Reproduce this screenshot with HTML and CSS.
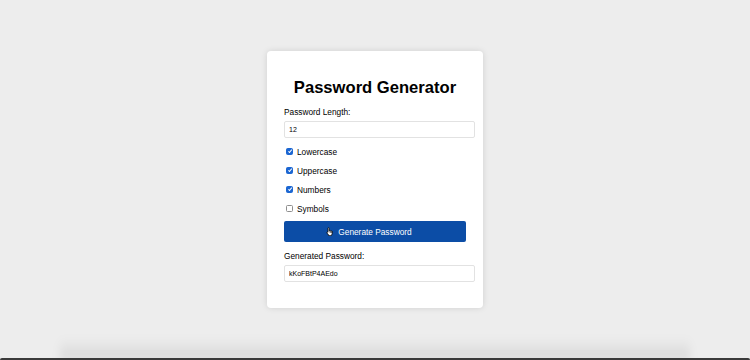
FILE: index.html
```html
<!DOCTYPE html>
<html lang="en">
<head>
  <meta charset="utf-8" />
  <meta name="viewport" content="width=device-width, initial-scale=1.0" />
  <title>Password Generator</title>
  <link rel="stylesheet" href="styles.css">
</head>
<body>
  <div class="container">
    <h1>Password Generator</h1>

    <label for="length" class="field-label">Password Length:</label>
    <input type="number" id="length" class="text-input" value="12" min="4" max="64">

    <div class="option"><input type="checkbox" id="lowercase" checked><label for="lowercase">Lowercase</label></div>
    <div class="option"><input type="checkbox" id="uppercase" checked><label for="uppercase">Uppercase</label></div>
    <div class="option"><input type="checkbox" id="numbers" checked><label for="numbers">Numbers</label></div>
    <div class="option"><input type="checkbox" id="symbols"><label for="symbols">Symbols</label></div>

    <button id="generate" class="generate-btn">
      Generate Password
      <svg class="cursor" viewBox="0 0 16 18" width="8" height="9">
        <path d="M5 1.2c.8 0 1.4.6 1.4 1.4v5.2l.6-.1c.4-.6 1.4-.6 1.8 0 .4-.5 1.4-.5 1.8.2.5-.3 1.5-.1 1.6.7l.3 3.6c0 1.6-.6 3-1.6 4v1.2H5.2v-1.4L2 12.2c-.6-.8-.4-1.7.4-2 .6-.3 1.2 0 1.6.5V2.6c0-.8.4-1.4 1-1.4z" fill="#fff" stroke="#000" stroke-width="1.6" stroke-linejoin="round"/>
        <path d="M8.1 8.4v3.2M9.9 8.6v3M11.7 9v2.6" stroke="#000" stroke-width="1.2"/>
      </svg>
    </button>

    <label for="password" class="field-label">Generated Password:</label>
    <input type="text" id="password" class="text-input" value="kKoFBtP4AEdo" readonly>
  </div>

  <div class="window-edge"></div>

  <script>
    const sets = {
      lowercase: "abcdefghijklmnopqrstuvwxyz",
      uppercase: "ABCDEFGHIJKLMNOPQRSTUVWXYZ",
      numbers: "0123456789",
      symbols: "!@#$%^&*()_+-=[]{}"
    };

    document.getElementById("generate").addEventListener("click", () => {
      const length = parseInt(document.getElementById("length").value, 10) || 12;
      let chars = "";
      Object.keys(sets).forEach(key => {
        if (document.getElementById(key).checked) chars += sets[key];
      });
      if (!chars) return;

      let result = "";
      for (let i = 0; i < length; i++) {
        result += chars[Math.floor(Math.random() * chars.length)];
      }
      document.getElementById("password").value = result;
    });
  </script>
</body>
</html>
```

FILE: styles.css
```css
html, body {
  height: 100%;
}

body {
  margin: 0;
  background: #ededed;
  font-family: 'Liberation Sans', Arial, sans-serif;
  color: #000;
  overflow: hidden;
}

.container {
  box-sizing: border-box;
  width: 216px;
  margin: 51px auto 0;
  padding: 17px 17px 22px;
  background: #fff;
  border-radius: 4px;
  box-shadow: 0 0 6px rgba(0, 0, 0, 0.12);
}

.container h1 {
  margin: 10px 0 9px;
  font-size: 16.6px;
  line-height: 20px;
  text-align: center;
  white-space: nowrap;
}

.field-label {
  display: block;
  font-size: 8.3px;
  line-height: 10px;
  margin-bottom: 4px;
}

.text-input {
  display: block;
  box-sizing: border-box;
  width: 191px;
  height: 17px;
  padding: 0 4px;
  margin: 0 0 4px;
  border: 1px solid #e2e2e2;
  border-radius: 2px;
  font-family: inherit;
  font-size: 7px;
  color: #000;
  background: #fff;
  outline: none;
}

.text-input::-webkit-inner-spin-button {
  display: none;
}

.option {
  display: flex;
  align-items: center;
  height: 19px;
  font-size: 8.3px;
}

.option input {
  appearance: none;
  position: relative;
  box-sizing: border-box;
  width: 7px;
  height: 7px;
  margin: 0 4px 0 2px;
  border: 1px solid #8e8e8e;
  border-radius: 1.5px;
  background: #fff;
}

.option input:checked {
  border-color: #1b66d2;
  background: #1b66d2;
}

.option input:checked::after {
  content: "";
  position: absolute;
  left: 1.6px;
  top: 0;
  width: 1.4px;
  height: 3.2px;
  border: solid #fff;
  border-width: 0 1px 1px 0;
  transform: rotate(40deg);
}

.generate-btn {
  position: relative;
  display: block;
  width: 182px;
  height: 21px;
  margin: 3px 0 9px;
  padding: 0;
  border: none;
  border-radius: 2px;
  background: #0c4da6;
  color: #fff;
  font-family: inherit;
  font-size: 8.3px;
  cursor: pointer;
}

.cursor {
  position: absolute;
  left: 42px;
  top: 6px;
}

.window-edge {
  position: fixed;
  left: 60px;
  right: 60px;
  bottom: 0;
  height: 22px;
  background: linear-gradient(to bottom, rgba(0, 0, 0, 0), rgba(0, 0, 0, 0.09));
  filter: blur(4px);
}

body::after {
  content: "";
  position: fixed;
  left: 0;
  right: 0;
  bottom: 0;
  height: 2px;
  background: #3a3a3a;
  border-radius: 3px 3px 0 0;
}
```
